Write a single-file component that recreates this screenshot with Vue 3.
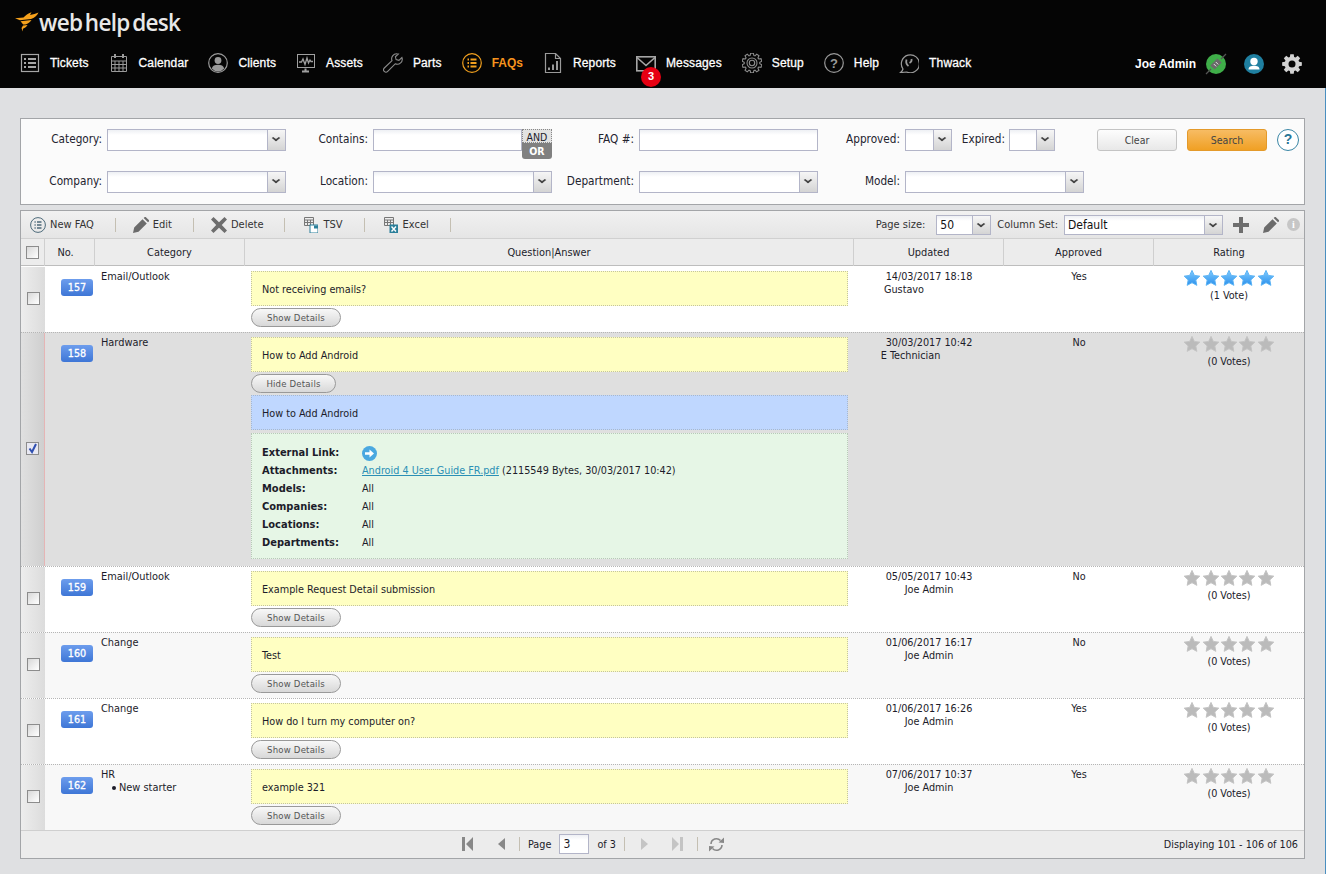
<script setup>
function gearPath(cx, cy, ro, ri, teeth) {
  const pts = []
  const step = (Math.PI * 2) / teeth
  for (let i = 0; i < teeth; i++) {
    const a = i * step - Math.PI / 2
    const w = step * 0.22
    const list = [[ri, a - w * 1.7], [ro, a - w], [ro, a + w], [ri, a + w * 1.7]]
    list.forEach(([r, t]) => pts.push((cx + r * Math.cos(t)).toFixed(2) + ' ' + (cy + r * Math.sin(t)).toFixed(2)))
  }
  return 'M' + pts.join('L') + 'Z'
}
const setupGear = gearPath(10, 10, 10, 7.8, 10)
const topGear = gearPath(10, 10, 10, 7.4, 8)
const nav = [
  { id: 'tickets', label: 'Tickets' },
  { id: 'calendar', label: 'Calendar' },
  { id: 'clients', label: 'Clients' },
  { id: 'assets', label: 'Assets' },
  { id: 'parts', label: 'Parts' },
  { id: 'faqs', label: 'FAQs', active: true },
  { id: 'reports', label: 'Reports' },
  { id: 'messages', label: 'Messages', badge: 3 },
  { id: 'setup', label: 'Setup' },
  { id: 'help', label: 'Help' },
  { id: 'thwack', label: 'Thwack' }
]
const rows = [
  { no: 157, cat: 'Email/Outlook', q: 'Not receiving emails?', date: '14/03/2017 18:18', who: 'Gustavo', shift: 50, appr: 'Yes', on: true, votes: '(1 Vote)', tone: 'white' },
  { no: 158, cat: 'Hardware', q: 'How to Add Android', date: '30/03/2017 10:42', who: 'E Technician', shift: 37, appr: 'No', votes: '(0 Votes)', tone: 'sel', open: true },
  { no: 159, cat: 'Email/Outlook', q: 'Example Request Detail submission', date: '05/05/2017 10:43', who: 'Joe Admin', shift: 0, appr: 'No', votes: '(0 Votes)', tone: 'white' },
  { no: 160, cat: 'Change', q: 'Test', date: '01/06/2017 16:17', who: 'Joe Admin', shift: 0, appr: 'No', votes: '(0 Votes)', tone: 'alt' },
  { no: 161, cat: 'Change', q: 'How do I turn my computer on?', date: '01/06/2017 16:26', who: 'Joe Admin', shift: 0, appr: 'Yes', votes: '(0 Votes)', tone: 'white' },
  { no: 162, cat: 'HR', sub: 'New starter', q: 'example 321', date: '07/06/2017 10:37', who: 'Joe Admin', shift: 0, appr: 'Yes', votes: '(0 Votes)', tone: 'alt' }
]
const details = ['Models', 'Companies', 'Locations', 'Departments']
const star = 'M9 1.4l2.35 5.05 5.45.7-4 3.78 1.03 5.42L9 13.7l-4.83 2.65 1.03-5.42-4-3.78 5.45-.7z'
const pencil = 'M0 16l1.200-5.500L9.500 2.200l4.300 4.300-8.300 8.300zM10.700 1l.8-.8a1 1 0 0 1 1.400 0l2.900 2.900a1 1 0 0 1 0 1.400l-.8.8z'
</script>

<template>
  <div class="page">
    <header class="top">
      <div class="logo">
        <svg class="flame" width="24" height="20" viewBox="0 0 24 20" fill="#f5a11c">
          <path d="M0 6.200L8.500 5.600C10.500 3.400 13 1.400 16.500.2L15 3C18 2.600 21 1.700 23.500.5 22 3.800 19.500 6 16 7L5 8.200z" />
          <path d="M5.500 9.200L16.500 8C15 10.400 13 11.800 10.500 12.400L8.200 12.600z" />
          <path d="M8 13.600L12.500 13C11.500 14.800 10 16 8 16.800L7.500 19.500 6.500 16z" />
        </svg>
        <span class="logo-text">web help desk</span>
      </div>
      <div class="bar">
        <nav class="nav">
          <a v-for="n in nav" :key="n.id" class="nav-item" :class="{ active: n.active }">
            <span class="nav-icon">
              <svg v-if="n.id === 'tickets'" width="20" height="20" viewBox="0 0 20 20" fill="none" stroke="#a6a6a6">
                <rect x="1.500" y="1.500" width="17" height="17" stroke-width="1.200" />
                <path stroke-width="2" d="M4 6h2M8 6h8M4 10h2M8 10h8M4 14h2M8 14h8" />
              </svg>
              <svg v-else-if="n.id === 'calendar'" width="20" height="20" viewBox="0 0 20 20" fill="none" stroke="#9a9a9a">
                <path d="M2.500 3.500h15v15h-15zM2.500 8h15M2.500 11.500h15M2.500 15h15M6 8v10.500M10 8v10.500M14 8v10.500" />
                <path stroke-width="2" d="M6 1v4M14 1v4" />
              </svg>
              <svg v-else-if="n.id === 'clients'" width="20" height="20" viewBox="0 0 20 20">
                <circle cx="10" cy="10" r="9.300" fill="none" stroke="#9a9a9a" stroke-width="1.200" />
                <circle cx="10" cy="7.500" r="3.400" fill="#9a9a9a" />
                <path fill="#9a9a9a" d="M3.800 15.500c.6-2.800 3-3.800 6.200-3.800s5.600 1 6.200 3.800a8 8 0 0 1-12.400 0z" />
              </svg>
              <svg v-else-if="n.id === 'assets'" width="20" height="20" viewBox="0 0 20 20" fill="none" stroke="#a0a0a0">
                <rect x="1.500" y="1.500" width="17" height="13" />
                <path stroke-width="1.300" d="M3 9h2.500l1.500-3 2 5.500L11 5l1.500 5 1.500-3 1 1.500h2" />
                <path stroke-width="2" d="M9.500 15.500v2M6 18.500h7" />
              </svg>
              <svg v-else-if="n.id === 'parts'" width="20" height="20" viewBox="0 0 20 20" fill="none" stroke="#8c8c8c" stroke-width="1.100">
                <path d="M14 .8a5 5 0 0 0-5 6.800L1.300 15a2.400 2.400 0 0 0 3.400 3.400l7.500-7.600a5 5 0 0 0 6.700-6.300l-3 2.800-2.800-.7-.7-2.800 3-2.800a5 5 0 0 0-1.400-.2z" />
              </svg>
              <svg v-else-if="n.id === 'faqs'" width="20" height="20" viewBox="0 0 20 20" fill="none" stroke="#f2a01e">
                <circle cx="10" cy="10" r="9.300" stroke-width="1.200" />
                <path stroke-width="2" d="M5.500 6.500h1.500M8.500 6.500h6M5.500 10h1.500M8.500 10h6M5.500 13.500h1.500M8.500 13.500h6" />
              </svg>
              <svg v-else-if="n.id === 'reports'" width="20" height="20" viewBox="0 0 20 20" fill="none" stroke="#9a9a9a">
                <path stroke-width="1.200" d="M2.500 .5h10l5 5v14h-15zM12.500 .5v5h5" />
                <path stroke-width="2" d="M6 17v-2.500M10 17v-5.500M14 17V8" />
              </svg>
              <svg v-else-if="n.id === 'messages'" width="20" height="20" viewBox="0 0 20 20" fill="none" stroke="#a6a6a6" stroke-width="1.600">
                <rect x=".8" y="3.800" width="18.400" height="14" />
                <path d="M1 4.500l9 8 9-8" />
              </svg>
              <svg v-else-if="n.id === 'setup'" width="20" height="20" viewBox="0 0 20 20" fill="none" stroke="#8c8c8c" stroke-width="1.100">
                <path :d="setupGear" />
                <circle cx="10" cy="10" r="5" />
                <circle cx="10" cy="10" r="2.700" />
              </svg>
              <svg v-else-if="n.id === 'help'" width="20" height="20" viewBox="0 0 20 20">
                <circle cx="10" cy="10" r="9.300" fill="none" stroke="#9a9a9a" stroke-width="1.200" />
                <text x="10" y="14.500" text-anchor="middle" class="svg-q" fill="#9a9a9a">?</text>
              </svg>
              <svg v-else width="20" height="20" viewBox="0 0 20 20" fill="none" stroke="#9a9a9a">
                <path stroke-width="1.200" d="M4 16a9 9 0 1 1 3.600 3l-6.100.6c1.300-.9 2.100-2.100 2.500-3.600z" />
                <path stroke-width="1.800" d="M7.500 6.500c-.6 2.500-.2 5 2 6.500M12.500 6c.4 1.800-.4 3.200-2 4" />
              </svg>
              <span v-if="n.badge" class="badge">{{ n.badge }}</span>
            </span>
            <span class="nav-label">{{ n.label }}</span>
          </a>
        </nav>
        <div class="user">
          <span class="user-name">Joe Admin</span>
          <svg class="plug" width="20" height="20" viewBox="0 0 20 20">
            <circle cx="10" cy="10" r="10" fill="#3fae49" />
            <path stroke="#6a6a6a" stroke-width="6" d="M6.500 13.500l7-7" />
            <path stroke="#555" stroke-width="1.300" d="M0 20l5-5M15 5l5-5" />
            <path stroke="#e4e4e4" d="M7.800 10l2.400 2.400M9.800 8l2.400 2.400" />
          </svg>
          <svg width="20" height="20" viewBox="0 0 20 20">
            <circle cx="10" cy="10" r="10" fill="#1f7fa0" />
            <circle cx="10" cy="7.500" r="3.700" fill="#fff" />
            <path fill="#fff" d="M4.500 15.500c0-2.800 2.500-3.800 5.500-3.800s5.500 1 5.500 3.800z" />
          </svg>
          <svg width="20" height="20" viewBox="0 0 20 20">
            <path :d="topGear" fill="#d2d2d2" />
            <circle cx="10" cy="10" r="3.500" fill="#050505" />
          </svg>
        </div>
      </div>
    </header>

    <section class="search">
      <label class="lab">Category:</label>
      <div class="combo"><i></i><b></b></div>
      <label class="lab">Contains:</label>
      <div class="contains">
        <div class="inp"></div>
        <div class="andor"><span class="and">AND</span><span class="or">OR</span></div>
      </div>
      <label class="lab">FAQ #:</label>
      <div class="inp"></div>
      <label class="lab">Approved:</label>
      <div class="tail">
        <div class="combo mini"><i></i><b></b></div>
        <label class="lab expired">Expired:</label>
        <div class="combo mini two"><i></i><b></b></div>
        <button class="btn clear">Clear</button>
        <button class="btn find">Search</button>
        <span class="qhelp">?</span>
      </div>
      <label class="lab">Company:</label>
      <div class="combo"><i></i><b></b></div>
      <label class="lab">Location:</label>
      <div class="combo"><i></i><b></b></div>
      <label class="lab">Department:</label>
      <div class="combo"><i></i><b></b></div>
      <label class="lab">Model:</label>
      <div class="combo model"><i></i><b></b></div>
    </section>

    <section class="grid">
      <div class="tools">
        <span class="tool"><svg width="16" height="16" viewBox="0 0 16 16" fill="none" stroke="#4d6a7a"><circle cx="8" cy="8" r="7.400" /><path stroke-width="1.600" d="M4.500 5h1.200M7 5h4.500M4.500 8h1.200M7 8h4.500M4.500 11h1.200M7 11h4.500" /></svg>New FAQ</span>
        <i class="sep"></i>
        <span class="tool"><svg width="16" height="16" viewBox="0 0 16 16"><path fill="#6b6b6b" :d="pencil" /></svg>Edit</span>
        <i class="sep"></i>
        <span class="tool"><svg width="16" height="16" viewBox="0 0 16 16"><path fill="#6e6e6e" d="M2.500 0L8 5.200 13.500 0 16 2.500 10.800 8l5.200 5.500-2.500 2.500L8 10.800 2.500 16 0 13.500 5.200 8 0 2.500z" /></svg>Delete</span>
        <i class="sep"></i>
        <span class="tool sheet"><svg width="14" height="16" viewBox="0 0 14 16" fill="none"><path stroke="#777" d="M.5 .500h9v8h-9zM.5 3h9M.5 5.500h9M3.500 3v5.500M6.500 3v5.500" /><rect x="6" y="8" width="8" height="8" fill="#fff" stroke="#2a7f9a" /><path fill="#2a7f9a" d="M10 8.500h4v3h-4z" /></svg>TSV</span>
        <i class="sep"></i>
        <span class="tool sheet"><svg width="14" height="16" viewBox="0 0 14 16" fill="none"><path stroke="#777" d="M.5 .500h9v8h-9zM.5 3h9M.5 5.500h9M3.500 3v5.500M6.500 3v5.500" /><rect x="5.500" y="7.500" width="8.500" height="8.500" fill="#2a7f9a" /><path stroke="#fff" stroke-width="1.400" d="M7.500 9.500l4.500 5M12 9.500l-4.500 5" /></svg>Excel</span>
        <i class="sep"></i>
        <span class="tools-right">
          <span class="ps">Page size:</span>
          <div class="combo size"><i class="val">50</i><b></b></div>
          <span class="cs">Column Set:</span>
          <div class="combo colset"><i class="val">Default</i><b></b></div>
          <svg class="ico-plus" width="16" height="16" viewBox="0 0 16 16"><path fill="#6e6e6e" d="M6 0h4v6h6v4h-6v6H6v-6H0V6h6z" /></svg>
          <svg class="ico-pen" width="16" height="16" viewBox="0 0 16 16"><path fill="#6b6b6b" :d="pencil" /></svg>
          <span class="ico-info">i</span>
        </span>
      </div>

      <div class="thead">
        <div class="th chk"><span class="box"></span></div>
        <div class="th th-no">No.</div>
        <div class="th">Category</div>
        <div class="th">Question|Answer</div>
        <div class="th">Updated</div>
        <div class="th">Approved</div>
        <div class="th th-end">Rating</div>
      </div>

      <div v-for="r in rows" :key="r.no" class="row" :class="r.tone">
        <div class="c-check"><span class="box" :class="{ checked: r.open }"><svg v-if="r.open" width="11" height="11" viewBox="0 0 11 11"><path fill="none" stroke="#2f4fb0" stroke-width="2" d="M2.500 5.500l2.500 3.500 4-8" /></svg></span></div>
        <div class="c-no"><span class="num">{{ r.no }}</span></div>
        <div class="c-cat">{{ r.cat }}<div v-if="r.sub" class="sub">{{ r.sub }}</div></div>
        <div class="c-q">
          <div class="note yellow">{{ r.q }}</div>
          <button class="pill" :class="{ hide: r.open }">{{ r.open ? 'Hide Details' : 'Show Details' }}</button>
          <template v-if="r.open">
            <div class="note blue">{{ r.q }}</div>
            <div class="note green">
              <div class="dl"><span class="dt">External Link:</span><svg width="15" height="15" viewBox="0 0 15 15"><circle cx="7.500" cy="7.500" r="7.500" fill="#4aa8e0" /><path fill="#fff" d="M3 6.300h4.500V3.500l4.500 4-4.500 4V8.700H3z" /></svg></div>
              <div class="dl"><span class="dt">Attachments:</span><span><a class="link">Android 4 User Guide FR.pdf</a> (2115549 Bytes, 30/03/2017 10:42)</span></div>
              <div v-for="d in details" :key="d" class="dl"><span class="dt">{{ d }}:</span><span>All</span></div>
            </div>
          </template>
        </div>
        <div class="c-upd"><div>{{ r.date }}</div><div :style="{ paddingRight: r.shift + 'px' }">{{ r.who }}</div></div>
        <div class="c-appr">{{ r.appr }}</div>
        <div class="c-rate">
          <div class="stars">
            <svg v-for="s in 5" :key="s" width="18" height="18" viewBox="0 0 18 18">
              <defs><linearGradient id="sb" x1="0" y1="0" x2="0" y2="1"><stop offset="0" stop-color="#7fcbff" /><stop offset="1" stop-color="#2b90ec" /></linearGradient></defs>
              <path :d="star" :fill="r.on ? 'url(#sb)' : '#bbbbbb'" :stroke="r.on ? '#5db4f5' : '#c4c4c4'" stroke-linejoin="round" />
            </svg>
          </div>
          <div>{{ r.votes }}</div>
        </div>
      </div>

      <div class="pager">
        <svg class="pg" width="11" height="14" viewBox="0 0 11 14"><path fill="#888" d="M0 0h3v14H0zM11 0v14L4 7z" /></svg>
        <svg class="pg pg-prev" width="8" height="14" viewBox="0 0 8 14"><path fill="#888" d="M8 1v12L1 7z" /></svg>
        <i class="sep s1"></i>
        <span class="pg-txt">Page</span>
        <span class="pg-inp">3</span>
        <span class="pg-txt">of 3</span>
        <i class="sep s2"></i>
        <svg class="pg" width="8" height="14" viewBox="0 0 8 14"><path fill="#c4c4c4" d="M0 1v12l7-6z" /></svg>
        <svg class="pg pg-last" width="11" height="14" viewBox="0 0 11 14"><path fill="#c4c4c4" d="M0 0v14l7-7zM8 0h3v14H8z" /></svg>
        <i class="sep s3"></i>
        <svg class="pg" width="15" height="15" viewBox="0 0 15 15" fill="none" stroke="#888" stroke-width="1.600"><path d="M2 7a5.500 5.500 0 0 1 9.500-3.500M13 8a5.500 5.500 0 0 1-9.500 3.500" /><path fill="#888" stroke="none" d="M9.500 5.500L15 6V.5zM5.500 9.500L0 9v5.500z" /></svg>
        <span class="display">Displaying 101 - 106 of 106</span>
      </div>
    </section>
  </div>
</template>

<style>
html, body { margin: 0; background: #dfe0e2; }
</style>

<style scoped>
.page {
  height: 874px;
  overflow: hidden;
  background: #dfe0e2;
  box-shadow: inset -1px 0 #4a8fc0;
  font-family: "DejaVu Sans Condensed", "DejaVu Sans", sans-serif;
  font-size: 10.750px;
  color: #1c1c2a;
}
.top {
  height: 88px;
  background: #050505;
  display: flex;
  flex-direction: column;
  box-sizing: border-box;
  padding-top: 9px;
}
.logo { display: flex; align-items: flex-start; padding-left: 15px; height: 37px; }
.flame { margin-top: 3px; flex: none; }
.logo-text {
  font-family: "Open Sans", sans-serif;
  font-weight: 600;
  font-size: 22.500px;
  line-height: 28px;
  letter-spacing: -0.7px;
  word-spacing: -2.500px;
  color: #e8e8e8;
}
.bar { display: flex; align-items: center; height: 34px; }
.nav { display: flex; gap: 20px; padding-left: 20px; }
.nav-item {
  display: flex;
  align-items: center;
  gap: 10px;
  font-family: "Liberation Sans", Arial, sans-serif;
  font-size: 12px;
  letter-spacing: .14px;
  color: #fff;
  -webkit-text-stroke: 0.3px #fff;
}
.nav-item.active { color: #f7941d; font-weight: bold; letter-spacing: 0; -webkit-text-stroke: 0; }
.nav-icon { position: relative; width: 20px; height: 20px; display: block; }
.nav-icon svg { display: block; }
.svg-q { font-family: "Liberation Sans", sans-serif; font-weight: bold; font-size: 13px; -webkit-text-stroke: 0; }
.badge {
  position: absolute;
  left: 5px;
  top: 14px;
  width: 20px;
  height: 20px;
  border-radius: 50%;
  background: #e60012;
  color: #fff;
  font-size: 11px;
  font-weight: bold;
  text-align: center;
  line-height: 18px;
  letter-spacing: 0;
  -webkit-text-stroke: 0;
}
.user { margin-left: auto; display: flex; align-items: center; padding-right: 24px; gap: 18px; margin-top: 2px; }
.plug { overflow: visible; }
.user-name {
  font-family: "Liberation Sans", Arial, sans-serif;
  font-size: 12px;
  font-weight: bold;
  color: #fff;
  margin-right: -8px;
}
.search {
  box-sizing: border-box;
  margin: 30px 21px 0 20px;
  height: 87px;
  border: 1px solid #a3a5a8;
  background: #fbfbfb;
  padding-top: 10px;
  display: grid;
  grid-template-columns: 86px 179px 87px 179px 87px 179px 87px 1fr;
  grid-template-rows: 22px 22px;
  row-gap: 20px;
  font-size: 11.700px;
}
.lab {
  text-align: right;
  padding-right: 5px;
  line-height: 21px;
  color: #23232f;
}
.inp, .combo {
  box-sizing: border-box;
  height: 22px;
  border: 1px solid #b3b5c8;
  background: linear-gradient(#eef0f4, #fff 5px);
  display: flex;
}
.combo { width: 179px; }
.combo i { flex: 1; font-style: normal; }
.combo b {
  width: 17px;
  position: relative;
  border-left: 1px solid #b3b5c8;
  background: linear-gradient(#f6f6f6, #d4d4d4);
}
.combo b::after {
  content: "";
  position: absolute;
  left: 5px;
  top: 5px;
  width: 4px;
  height: 4px;
  border: solid #444;
  border-width: 0 2px 2px 0;
  transform: scaleY(.75) rotate(45deg);
}
.combo .val { font-size: 12px; line-height: 19px; padding-left: 3px; color: #111; }
.contains { display: flex; height: 22px; }
.contains .inp { width: 149px; }
.andor { width: 30px; display: flex; flex-direction: column; flex: none; }
.andor span { display: block; text-align: center; }
.and {
  box-sizing: border-box;
  height: 14px;
  line-height: 14px;
  background: #e2e2e2;
  border: 1px dotted #888;
  font-size: 10.500px;
}
.or {
  height: 16px;
  line-height: 17px;
  background: #808080;
  color: #fff;
  font-weight: bold;
  font-size: 10.500px;
  border-radius: 0 0 3px 3px;
}
.tail { display: flex; align-items: flex-start; }
.mini { width: 47px; }
.expired { width: 57px; padding-right: 4px; box-sizing: border-box; }
.two { width: 46px; }
.btn {
  box-sizing: border-box;
  width: 80px;
  height: 22px;
  padding: 0;
  border-radius: 3px;
  font: inherit;
  font-size: 10.500px;
  color: #444;
}
.clear { margin-left: 42px; border: 1px solid #c4c4c4; background: linear-gradient(#fdfdfd, #e8e8e8); }
.find { margin-left: 10px; border: 1px solid #e49a2a; background: linear-gradient(#f7bc64, #f0a024); }
.qhelp {
  box-sizing: border-box;
  margin-left: 10px;
  width: 22px;
  height: 22px;
  border-radius: 50%;
  border: 1.500px solid #3a86a5;
  background: #fff;
  color: #2a7696;
  font: bold 14px/19px "Liberation Sans", sans-serif;
  text-align: center;
}
.model { width: 179px; }
.grid {
  margin: 5px 21px 0 20px;
  border: 1px solid #a3a5a8;
  background: #fff;
  box-sizing: border-box;
  height: 649px;
}
.tools {
  height: 27px;
  background: linear-gradient(#f1f1f1, #e5e5e5);
  display: flex;
  align-items: center;
  padding-left: 9px;
  font-size: 11px;
  color: #333;
}
.tool { display: flex; align-items: center; gap: 4px; }
.sheet { gap: 5px; margin-left: 2px; }
.sep { display: block; width: 1px; height: 14px; background: #c4bfb2; margin: 0 17px 0 21px; }
.tools-right { margin-left: auto; display: flex; align-items: center; height: 27px; font-size: 11px; }
.ps { margin-right: 11px; }
.tools-right .combo { height: 20px; }
.size { width: 55px; }
.cs { margin: 0 6px; }
.colset { width: 159px; }
.ico-plus { margin-left: 10px; }
.ico-pen { margin-left: 14px; }
.ico-info {
  width: 13px;
  height: 13px;
  border-radius: 50%;
  background: #c6c6c6;
  color: #fff;
  margin: 0 4px 0 8px;
  text-align: center;
  font: bold 10px/13px "Liberation Serif", serif;
}
.thead, .row {
  display: grid;
  grid-template-columns: 24px 50px 150px 609px 150px 150px 150px;
}
.thead {
  height: 28px;
  box-sizing: border-box;
  background: #ececec;
  border-top: 1px solid #d0d0d0;
  border-bottom: 1px solid #bdbdbd;
}
.th {
  border-right: 1px solid #cfcfcf;
  text-align: center;
  line-height: 27px;
  font-size: 10.900px;
}
.th-no { padding-right: 8px; }
.th-end { border-right: 0; }
.chk { display: flex; align-items: center; justify-content: center; }
.box {
  box-sizing: border-box;
  display: block;
  width: 13px;
  height: 13px;
  border: 1px solid #8c8c8c;
  background: linear-gradient(135deg, #d8d8d8, #fff);
}
.row { box-sizing: border-box; min-height: 66px; border-top: 1px dotted #b5b5b5; }
.thead + .row { border-top-color: transparent; }
.white { background: #fff; }
.alt { background: #f8f8f8; }
.sel { background: #dfdfdf; }
.c-check {
  display: flex;
  align-items: center;
  justify-content: center;
  padding-bottom: 2px;
  background: linear-gradient(90deg, #ededed, #dcdcdc);
}
.sel .c-check { border-right: 1px solid #e5b5b5; background: linear-gradient(90deg, #e0e0e0, #cfcfcf); }
.checked { background: #e8e8f2; display: flex; align-items: center; justify-content: center; }
.c-no { display: flex; justify-content: flex-end; padding-right: 2px; padding-top: 12px; align-items: flex-start; }
.num {
  width: 32px;
  height: 17px;
  border-radius: 3px;
  background: linear-gradient(#6d9ded, #3e76d6);
  color: #fff;
  font-size: 10.700px;
  -webkit-text-stroke: .3px #fff;
  line-height: 18px;
  text-align: center;
}
.c-cat { padding: 3px 0 0 6px; line-height: 13px; font-size: 10.900px; }
.sub { position: relative; padding-left: 18px; }
.sub::before {
  content: "";
  position: absolute;
  left: 11px;
  top: 5px;
  width: 4px;
  height: 4px;
  border-radius: 50%;
  background: #1c1c2a;
}
.c-q { padding: 4px 6px 0; }
.sel .c-q { padding-bottom: 7px; }
.note {
  box-sizing: border-box;
  border: 1px dotted #c4c4a0;
  padding-left: 10px;
  height: 35px;
  line-height: 35px;
  width: 597px;
}
.yellow { background: #ffffc2; }
.blue { background: #bfd7ff; border-color: #a8b8cc; margin-top: 2px; }
.green {
  background: #e6f6e6;
  border-color: #b8c8b8;
  height: 126px;
  margin-top: 3px;
  padding-top: 10px;
  line-height: 18px;
}
.dl { display: flex; height: 18px; align-items: center; }
.dt { width: 100px; font-weight: bold; flex: none; font-size: 11px; }
.link { color: #2a8fb5; text-decoration: underline; }
.pill {
  display: block;
  box-sizing: border-box;
  margin: 2px 0 0;
  width: 90px;
  height: 19px;
  padding: 0;
  border: 1px solid #999;
  border-radius: 10px;
  background: linear-gradient(#f8f8f8, #d8d8d8);
  font: inherit;
  font-size: 9.500px;
  letter-spacing: .2px;
  color: #555;
}
.pill.hide { width: 85px; }
.c-upd { text-align: center; padding-top: 3px; line-height: 13px; }
.c-appr { text-align: center; padding-top: 3px; line-height: 13px; }
.c-rate { text-align: center; padding-top: 2px; line-height: 13px; }
.stars { display: flex; justify-content: center; gap: .3px; height: 20px; }
.pager {
  height: 28px;
  box-sizing: border-box;
  border-top: 1px solid #cfcfcf;
  background: #ececec;
  display: flex;
  align-items: center;
  padding-left: 441px;
  padding-bottom: 1px;
}
.pg { display: block; flex: none; }
.pg-prev { margin-left: 24px; }
.s1 { margin: 0 8px 0 14px; }
.pg-inp {
  box-sizing: border-box;
  width: 30px;
  height: 20px;
  margin: 0 8px;
  border: 1px solid #b3b5c8;
  background: linear-gradient(#eef0f4, #fff 5px);
  font-size: 12px;
  line-height: 19px;
  padding-left: 3px;
}
.s2 { margin: 0 16px 0 8px; }
.pg-last { margin-left: 23px; }
.s3 { margin: 0 11px 0 14px; }
.display { margin-left: auto; padding-right: 6px; }
</style>
